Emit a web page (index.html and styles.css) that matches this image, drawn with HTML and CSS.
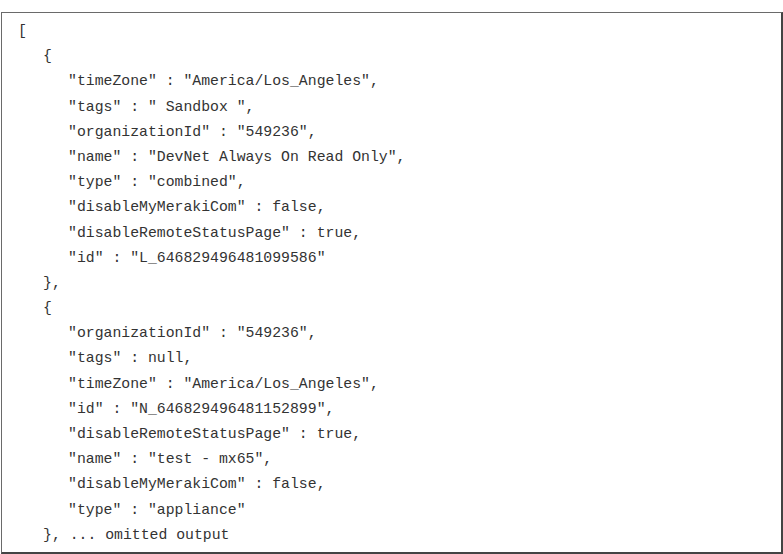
FILE: index.html
```html
<!DOCTYPE html>
<html>
<head>
<meta charset="utf-8">
<link rel="stylesheet" href="styles.css">
</head>
<body>
<div class="frame">
  <div class="code">
    <div class="ln l0">[</div>
    <div class="ln l1">{</div>
    <div class="ln l2">"timeZone" : "America/Los_Angeles",</div>
    <div class="ln l2">"tags" : " Sandbox ",</div>
    <div class="ln l2">"organizationId" : "549236",</div>
    <div class="ln l2">"name" : "DevNet Always On Read Only",</div>
    <div class="ln l2">"type" : "combined",</div>
    <div class="ln l2">"disableMyMerakiCom" : false,</div>
    <div class="ln l2">"disableRemoteStatusPage" : true,</div>
    <div class="ln l2">"id" : "L_646829496481099586"</div>
    <div class="ln l1">},</div>
    <div class="ln l1">{</div>
    <div class="ln l2">"organizationId" : "549236",</div>
    <div class="ln l2">"tags" : null,</div>
    <div class="ln l2">"timeZone" : "America/Los_Angeles",</div>
    <div class="ln l2">"id" : "N_646829496481152899",</div>
    <div class="ln l2">"disableRemoteStatusPage" : true,</div>
    <div class="ln l2">"name" : "test - mx65",</div>
    <div class="ln l2">"disableMyMerakiCom" : false,</div>
    <div class="ln l2">"type" : "appliance"</div>
    <div class="ln l1">}, ... omitted output</div>
  </div>
</div>
</body>
</html>
```

FILE: styles.css
```css
html, body {
  margin: 0;
  padding: 0;
  background: #ffffff;
}
.frame {
  margin: 12px 0 0 1px;
  width: 779px;
  height: 539px;
  border: 1px solid #6a6a6a;
  border-right: 2px solid #444444;
  border-bottom: 2px solid #444444;
  background: #ffffff;
  overflow: hidden;
}
.code {
  display: flex;
  flex-direction: column;
  padding: 6px 0 0 16px;
  font-family: "Liberation Mono", "Courier New", monospace;
  font-size: 14.8px;
  line-height: 25.2px;
  color: #333333;
}
.ln {
  white-space: pre;
  height: 25.2px;
}
.l0 { padding-left: 0; }
.l1 { padding-left: 25px; }
.l2 { padding-left: 50px; }
```
